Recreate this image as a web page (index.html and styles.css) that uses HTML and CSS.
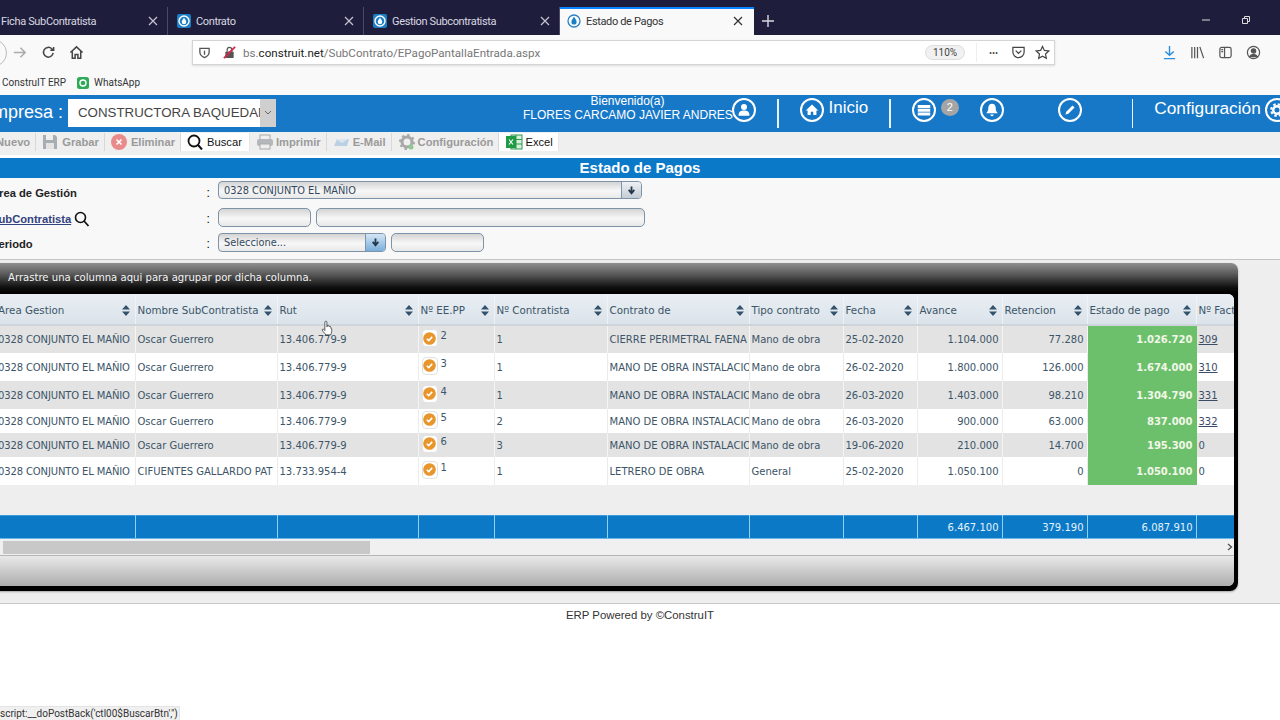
FILE: index.html
```html
<!DOCTYPE html>
<html lang="es">
<head>
  <meta charset="UTF-8" />
  <title>Estado de Pagos</title>
  <link rel="stylesheet" href="styles.css">
</head>
<body>
  <!-- browser chrome -->
  <div class="tabbar">
    <div class="tab first">
      <svg class="favicon" viewBox="0 0 14 14"><rect width="14" height="14" rx="2" fill="#1c7fc4"/><circle cx="7" cy="7" r="5" fill="none" stroke="#fff" stroke-width="1.4"/><path d="M7 3.500c.8 1.600 2.200 2.800 2.200 4.500a2.200 2.200 0 0 1-4.400 0c0-1.700 1.400-2.900 2.200-4.500z" fill="#fff"/></svg>
      <span class="tab-title">Ficha SubContratista</span>
      <svg class="tab-close" viewBox="0 0 10 10"><path d="M1 1l8 8M9 1l-8 8"/></svg>
    </div>
    <div class="tab">
      <svg class="favicon" viewBox="0 0 14 14"><rect width="14" height="14" rx="2" fill="#1c7fc4"/><circle cx="7" cy="7" r="5" fill="none" stroke="#fff" stroke-width="1.4"/><path d="M7 3.500c.8 1.600 2.200 2.800 2.200 4.500a2.200 2.200 0 0 1-4.400 0c0-1.700 1.400-2.900 2.200-4.500z" fill="#fff"/></svg>
      <span class="tab-title">Contrato</span>
      <svg class="tab-close" viewBox="0 0 10 10"><path d="M1 1l8 8M9 1l-8 8"/></svg>
    </div>
    <div class="tab">
      <svg class="favicon" viewBox="0 0 14 14"><rect width="14" height="14" rx="2" fill="#1c7fc4"/><circle cx="7" cy="7" r="5" fill="none" stroke="#fff" stroke-width="1.4"/><path d="M7 3.500c.8 1.600 2.200 2.800 2.200 4.500a2.200 2.200 0 0 1-4.400 0c0-1.700 1.400-2.900 2.200-4.500z" fill="#fff"/></svg>
      <span class="tab-title">Gestion Subcontratista</span>
      <svg class="tab-close" viewBox="0 0 10 10"><path d="M1 1l8 8M9 1l-8 8"/></svg>
    </div>
    <div class="tab active">
      <svg class="favicon" viewBox="0 0 14 14"><circle cx="7" cy="7" r="6" fill="#fff" stroke="#2a82c6" stroke-width="1.3"/><path d="M7 2.500c1 2 2.600 3.600 2.600 5.400A2.600 2.600 0 0 1 4.400 7.900C4.400 6.100 6 4.500 7 2.500z" fill="#1c7fc4"/></svg>
      <span class="tab-title">Estado de Pagos</span>
      <svg class="tab-close" viewBox="0 0 10 10"><path d="M1 1l8 8M9 1l-8 8"/></svg>
    </div>
    <svg class="tab-new" viewBox="0 0 14 14"><path d="M7 1v12M1 7h12"/></svg>
    <div class="window-btns">
      <svg viewBox="0 0 10 10"><path d="M1 5h8"/></svg>
      <svg viewBox="0 0 10 10"><path d="M1.500 3.500h5v5h-5zM3.500 3.500v-2h5v5h-2"/></svg>
    </div>
  </div>

  <div class="navbar">
    <div class="nav-back"></div>
    <svg class="nav-ico fwd" viewBox="0 0 16 16"><path d="M2 8h12M9 3l5 5-5 5"/></svg>
    <svg class="nav-ico reload" viewBox="0 0 16 16"><path d="M13 8.500A5.200 5.200 0 1 1 11.500 4L13.500 5.500M13.500 2v3.500H10"/></svg>
    <svg class="nav-ico home" viewBox="0 0 16 16"><path d="M1.500 8L8 2l6.500 6M3.500 7v7h3v-4h3v4h3V7"/></svg>
    <div class="urlbar">
      <svg class="url-shield" viewBox="0 0 14 14"><path d="M2 2.500h10v4c0 3.500-2.500 5-5 6-2.500-1-5-2.500-5-6z"/><path d="M7 5v4.500" /></svg>
      <svg class="url-lock" viewBox="0 0 14 14"><rect x="2.500" y="6" width="9" height="7" rx="1" fill="#555"/><path d="M4.500 6V4a2.500 2.500 0 0 1 5 0v2" fill="none" stroke="#555" stroke-width="1.300"/><path d="M1 13L13 1" stroke="#d7264a" stroke-width="2"/></svg>
      <span class="url-text">bs.<b>construit.net</b>/SubContrato/EPagoPantallaEntrada.aspx</span>
      <span class="zoom-pill">110%</span>
      <span class="url-sep"></span>
      <span class="url-dots">•••</span>
      <svg class="url-ico" viewBox="0 0 16 16"><path d="M2 2.500h12v5a6 6 0 0 1-12 0zM5 6l3 3 3-3"/></svg>
      <svg class="url-ico" viewBox="0 0 16 16"><path d="M8 1.500l2 4.300 4.700.6-3.500 3.200.9 4.700L8 12l-4.100 2.300.9-4.700L1.300 6.400 6 5.800z"/></svg>
    </div>
    <svg class="side-ico dl" viewBox="0 0 16 16"><path d="M8 1v10M3.500 7L8 11l4.500-4M2 14.500h12"/></svg>
    <svg class="side-ico" viewBox="0 0 16 16"><path d="M2 2v12M5 2v12M8 2v12M10.500 2l4 12"/></svg>
    <svg class="side-ico" viewBox="0 0 16 16"><rect x="2" y="2.500" width="12" height="11" rx="2"/><path d="M7 2.500v11" /><path d="M3.500 5h2M3.500 7h2" /></svg>
    <svg class="side-ico" viewBox="0 0 16 16"><circle cx="8" cy="8" r="6.500"/><circle cx="8" cy="6.300" r="2.300" fill="#555"/><path d="M3.800 12.500c1-2 2.500-2.500 4.200-2.500s3.200.5 4.200 2.500z" fill="#555"/></svg>
  </div>

  <div class="bookmarks">
    <span class="bm-item">ConstruIT ERP</span>
    <svg class="bm-wa" viewBox="0 0 12 12"><rect width="12" height="12" rx="2.500" fill="#2faa58"/><circle cx="6" cy="6" r="3.700" fill="#fff"/><circle cx="6" cy="6" r="2.300" fill="#2faa58"/></svg>
    <span class="bm-item">WhatsApp</span>
  </div>

  <!-- application header -->
  <header class="appbar">
    <span class="empresa-label">Empresa :</span>
    <div class="empresa-select">
      <span class="empresa-value">CONSTRUCTORA BAQUEDANO</span>
      <span class="empresa-arrow"><svg viewBox="0 0 8 5"><path d="M1 1l3 3 3-3"/></svg></span>
    </div>
    <div class="welcome">
      <div>Bienvenido(a)</div>
      <div>FLORES CARCAMO JAVIER ANDRES</div>
    </div>
    <span class="ring user"><svg viewBox="0 0 24 24"><circle cx="12" cy="8.500" r="3.600"/><path d="M5.500 18c0-4 2.500-5.500 6.500-5.500s6.500 1.500 6.500 5.500c0 .8-.5 1-1 1h-11c-.5 0-1-.2-1-1z"/></svg></span>
    <span class="bar-sep s1"></span>
    <span class="ring home"><svg viewBox="0 0 24 24"><path d="M12 5.500L4.500 12.500h2.200V18h3.800v-4h3v4h3.800v-5.500h2.200z"/></svg></span>
    <span class="bar-link inicio">Inicio</span>
    <span class="bar-sep s2"></span>
    <span class="ring list"><svg viewBox="0 0 24 24"><path d="M4.500 6h15v3.500h-15zM4.500 10.500h15v3.500h-15zM4.500 15h15v3.500h-15z"/></svg></span>
    <span class="badge">2</span>
    <span class="ring bell"><svg viewBox="0 0 24 24"><path d="M12 4.500c3 0 4.500 2.500 4.500 5.500 0 3 1 4.500 2.500 6H5c1.500-1.500 2.500-3 2.500-6 0-3 1.500-5.500 4.500-5.500z"/><path d="M10 17.500h4a2 2 0 0 1-4 0z"/></svg></span>
    <span class="ring pencil"><svg viewBox="0 0 24 24"><path d="M15 6.500l2.500 2.500-7.500 7.500-3.500 1 1-3.500z"/></svg></span>
    <span class="bar-sep s3"></span>
    <span class="bar-link config">Configuración</span>
    <span class="ring gear"><svg viewBox="0 0 24 24"><circle cx="12" cy="12" r="4.500" fill="none" stroke="#fff" stroke-width="3"/><circle cx="12" cy="12" r="7" fill="none" stroke="#fff" stroke-width="2.500" stroke-dasharray="3 2.500"/></svg></span>
  </header>

  <div class="toolbar">
    <div class="tool nuevo"><span>Nuevo</span></div>
    <div class="tool">
      <svg class="tool-ico" viewBox="0 0 16 16"><path d="M1 1h12l2 2v12H1z" fill="#a8adb2"/><rect x="4" y="1" width="7" height="5" fill="#eee"/><rect x="4" y="9" width="8" height="6" fill="#e4e4e4"/></svg>
      <span>Grabar</span>
    </div>
    <div class="tool">
      <svg class="tool-ico" viewBox="0 0 16 16"><circle cx="8" cy="8" r="8" fill="#e98b8b"/><path d="M5.500 5.500l5 5M10.500 5.500l-5 5" stroke="#fff" stroke-width="1.600"/></svg>
      <span>Eliminar</span>
    </div>
    <div class="tool on buscar">
      <svg class="tool-ico" viewBox="0 0 16 16"><circle cx="7" cy="7" r="5.500" fill="none" stroke="#111" stroke-width="1.800"/><path d="M11 11l4 4.500" stroke="#111" stroke-width="2"/></svg>
      <span>Buscar</span>
    </div>
    <div class="tool">
      <svg class="tool-ico wide" viewBox="0 0 18 16"><rect x="4" y="1" width="10" height="5" fill="none" stroke="#aaa"/><rect x="1" y="5" width="16" height="7" rx="2" fill="#b4b8bc"/><rect x="4" y="10" width="10" height="5" fill="#eee" stroke="#aaa"/></svg>
      <span>Imprimir</span>
    </div>
    <div class="tool">
      <svg class="tool-ico wide" viewBox="0 0 18 16"><path d="M1 12l3-7h12l-2 7z" fill="#bcd0e4"/><path d="M3 5h12l-6 4z" fill="#dbe6f0"/></svg>
      <span>E-Mail</span>
    </div>
    <div class="tool">
      <svg class="tool-ico wide" viewBox="0 0 18 16"><circle cx="9" cy="8" r="5" fill="none" stroke="#a8a8a8" stroke-width="3"/><circle cx="9" cy="8" r="7" fill="none" stroke="#a8a8a8" stroke-width="2" stroke-dasharray="2.500 3"/><circle cx="13" cy="13" r="2.500" fill="#8fc98f"/></svg>
      <span>Configuración</span>
    </div>
    <div class="tool on excel">
      <svg class="tool-ico wide" viewBox="0 0 18 16"><rect x="6" y="1" width="11" height="14" fill="#d7efdc" stroke="#2d9a4c"/><path d="M11 1v14M6 5.500h11M6 10h11" stroke="#2d9a4c"/><rect x="1" y="2" width="10" height="12" fill="#1f9a45"/><path d="M4 5.500l4 5M8 5.500l-4 5" stroke="#fff" stroke-width="1.200"/></svg>
      <span>Excel</span>
    </div>
  </div>

  <h1 class="page-title">Estado de Pagos</h1>

  <form class="filters">
    <label class="f-label">Area de Gestión</label>
    <span class="f-colon">:</span>
    <div class="f-fields">
      <div class="combo wide-combo"><span>0328 CONJUNTO EL MAÑIO</span><i class="combo-btn"><svg viewBox="0 0 8 8"><path d="M4 .5v5M1.500 3.500L4 6.500l2.500-3"/></svg></i></div>
    </div>
    <label class="f-label"><a href="#">SubContratista</a>
      <svg class="f-search" viewBox="0 0 16 16"><circle cx="6.500" cy="6.500" r="5" fill="none" stroke="#111" stroke-width="1.600"/><path d="M10 10l4.500 5" stroke="#111" stroke-width="1.800"/></svg>
    </label>
    <span class="f-colon">:</span>
    <div class="f-fields gap">
      <div class="txt w-rut"></div>
      <div class="txt w-name"></div>
    </div>
    <label class="f-label">Periodo</label>
    <span class="f-colon">:</span>
    <div class="f-fields gap">
      <div class="combo w-per"><span>Seleccione...</span><i class="combo-btn blue"><svg viewBox="0 0 8 8"><path d="M4 .5v5M1.500 3.500L4 6.500l2.500-3"/></svg></i></div>
      <div class="txt w-year"></div>
    </div>
  </form>

  <main class="content">
    <section class="panel">
      <div class="panel-head">Arrastre una columna aqui para agrupar por dicha columna.</div>
      <div class="panel-body">
        <table class="grid">
          <colgroup>
            <col class="c1"><col class="c2"><col class="c3"><col class="c4"><col class="c5"><col class="c6">
            <col class="c7"><col class="c8"><col class="c9"><col class="c10"><col class="c11"><col class="c12">
          </colgroup>
          <thead>
            <tr id="gridHead"></tr>
          </thead>
          <tbody id="gridBody"></tbody>
          <tfoot>
            <tr>
              <td></td><td></td><td></td><td></td><td></td><td></td><td></td><td></td>
              <td class="num">6.467.100</td><td class="num">379.190</td><td class="num">6.087.910</td><td></td>
            </tr>
          </tfoot>
        </table>
        <div class="hscroll">
          <div class="hscroll-thumb"></div>
          <svg class="hscroll-arrow" viewBox="0 0 6 8"><path d="M1 1l3.500 3L1 7"/></svg>
        </div>
        <div class="panel-foot"></div>
      </div>
    </section>
  </main>

  <footer class="page-foot">ERP Powered by ©ConstruIT</footer>

  <svg class="hand" viewBox="0 0 14 18"><path d="M4.500 9V2.300a1.200 1.200 0 0 1 2.400 0V7.500h.3V6.500a1.100 1.100 0 0 1 2.100 0v1h.2a1.100 1.100 0 0 1 2 .4V9.500a1 1 0 0 1 1 .5v3c0 1.500-1 2.500-1 4H5.500c-.5-1.500-3.500-4-4-5.500-.3-1 .8-1.800 1.700-1L4.500 12z"/></svg>
  <div class="status-tip">script:__doPostBack('ctl00$BuscarBtn','')</div>

  <script>
    // grid data
    var heads = ['Area Gestion', 'Nombre SubContratista', 'Rut', 'Nº EE.PP', 'Nº Contratista', 'Contrato de',
      'Tipo contrato', 'Fecha', 'Avance', 'Retencion', 'Estado de pago', 'Nº Factura'];
    var rows = [
      ['Oscar Guerrero', '13.406.779-9', 2, 1, 'CIERRE PERIMETRAL FAENA', 'Mano de obra', '25-02-2020', '1.104.000', '77.280', '1.026.720', '309', 'h28'],
      ['Oscar Guerrero', '13.406.779-9', 3, 1, 'MANO DE OBRA INSTALACION', 'Mano de obra', '26-02-2020', '1.800.000', '126.000', '1.674.000', '310', 'h28'],
      ['Oscar Guerrero', '13.406.779-9', 4, 1, 'MANO DE OBRA INSTALACION', 'Mano de obra', '26-03-2020', '1.403.000', '98.210', '1.304.790', '331', 'h28'],
      ['Oscar Guerrero', '13.406.779-9', 5, 2, 'MANO DE OBRA INSTALACION', 'Mano de obra', '26-03-2020', '900.000', '63.000', '837.000', '332', 'h24'],
      ['Oscar Guerrero', '13.406.779-9', 6, 3, 'MANO DE OBRA INSTALACION', 'Mano de obra', '19-06-2020', '210.000', '14.700', '195.300', '0', 'h24'],
      ['CIFUENTES GALLARDO PAT', '13.733.954-4', 1, 1, 'LETRERO DE OBRA', 'General', '25-02-2020', '1.050.100', '0', '1.050.100', '0', 'h28']
    ];
    var sortIcon = '<svg class="sort" viewBox="0 0 8 11"><path d="M4 0l4 4.500H0zM4 11L0 6.500h8z"/></svg>';
    var checkIcon = '<span class="chk"><svg viewBox="0 0 12 12"><circle cx="6" cy="6" r="5.800" fill="#e8952c"/><path d="M3.500 6.200l1.800 1.800 3.200-3.500" fill="none" stroke="#fff" stroke-width="1.500"/></svg></span>';

    document.getElementById('gridHead').innerHTML = heads.map(function (h, i) {
      return '<th><div class="th-in"><span>' + h + '</span>' + (i < 11 ? sortIcon : '') + '</div></th>';
    }).join('');

    document.getElementById('gridBody').innerHTML = rows.map(function (r) {
      var fact = r[10] === '0' ? '0' : '<a href="#">' + r[10] + '</a>';
      return '<tr class="' + r[11] + '">' +
        '<td class="area">0328 CONJUNTO EL MAÑIO</td><td>' + r[0] + '</td><td>' + r[1] + '</td>' +
        '<td class="ee">' + checkIcon + '<sup>' + r[2] + '</sup></td><td>' + r[3] + '</td>' +
        '<td>' + r[4] + '</td><td>' + r[5] + '</td><td>' + r[6] + '</td>' +
        '<td class="num">' + r[7] + '</td><td class="num">' + r[8] + '</td>' +
        '<td class="num pay">' + r[9] + '</td><td>' + fact + '</td></tr>';
    }).join('') + '<tr class="spacer"><td colspan="12"></td></tr>';
  </script>
</body>
</html>
```

FILE: styles.css
```css
html, body {
  margin: 0;
  height: 100%;
  overflow: hidden;
}
body {
  background: #fff;
  font-family: "Liberation Sans", Arial, sans-serif;
  width: 1280px;
  height: 720px;
  position: relative;
}

/* browser tabs */
.tabbar {
  height: 35px;
  background: #1f1d3c;
  display: flex;
  align-items: flex-end;
  font-family: Roboto, sans-serif;
}
.tab {
  width: 196px;
  height: 28px;
  box-sizing: border-box;
  display: flex;
  align-items: center;
  padding: 0 9px 0 9px;
  color: #d9d9e2;
  font-size: 11px;
  letter-spacing: -0.35px;
  border-right: 1px solid #4a4968;
}
.tab.first {
  margin-left: -27px;
  width: 195px;
}
.tab.active {
  height: 28px;
  width: 194px;
  padding: 0 11px 2px 7px;
  background: #f9f9fa;
  color: #333;
  border-right: none;
  border-top: 2px solid #0a84ff;
}
.favicon {
  width: 14px;
  height: 14px;
  margin-right: 5px;
  flex: none;
}
.tab-title {
  flex: 1;
  white-space: nowrap;
}
.tab-close {
  width: 10px;
  height: 10px;
  stroke: #c4c4d0;
  stroke-width: 1.2;
  fill: none;
}
.tab.active .tab-close {
  stroke: #333;
}
.tab-new {
  width: 14px;
  height: 14px;
  margin: 0 0 7px 7px;
  stroke: #d8d8e0;
  stroke-width: 1.4;
  fill: none;
}
.window-btns {
  margin-left: auto;
  margin-right: 29px;
  margin-bottom: 10px;
  display: flex;
  gap: 30px;
}
.window-btns svg {
  width: 10px;
  height: 10px;
  stroke: #ddd;
  fill: none;
}

/* nav bar */
.navbar {
  height: 35px;
  background: #f9f9fa;
  display: flex;
  align-items: center;
  position: relative;
}
.nav-back {
  width: 26px;
  height: 26px;
  border: 1px solid #bbb;
  border-radius: 50%;
  margin-left: -21px;
  flex: none;
}
.nav-ico {
  width: 15px;
  height: 15px;
  fill: none;
  stroke-width: 1.6;
  stroke: #444;
  flex: none;
}
.nav-ico.fwd {
  stroke: #aaa;
  margin-left: 5px;
}
.nav-ico.reload {
  margin-left: 14px;
}
.nav-ico.home {
  margin-left: 13px;
}
.urlbar {
  width: 863px;
  height: 25px;
  box-sizing: border-box;
  margin-left: 108px;
  background: #fff;
  border: 1px solid #d4d4d6;
  box-shadow: 0 1px 2px rgba(0,0,0,0.12);
  display: flex;
  align-items: center;
  font-family: Roboto, sans-serif;
  font-size: 11.6px;
  color: #777;
}
.url-shield {
  width: 13px;
  height: 13px;
  margin-left: 5px;
  fill: none;
  stroke: #555;
  stroke-width: 1.400;
}
.url-lock {
  width: 13px;
  height: 13px;
  margin-left: 12px;
}
.url-text {
  margin-left: 7px;
  white-space: nowrap;
}
.url-text b {
  font-weight: 400;
  color: #222;
}
.zoom-pill {
  margin-left: auto;
  width: 40px;
  height: 15px;
  box-sizing: border-box;
  line-height: 13px;
  text-align: center;
  font-size: 10px;
  color: #444;
  background: #f1f1f2;
  border: 1px solid #ddd;
  border-radius: 8px;
}
.url-sep {
  width: 1px;
  height: 19px;
  background: #eee;
  margin: 0 12px 0 11px;
}
.url-dots {
  color: #444;
  font-size: 9px;
  width: 13px;
  white-space: nowrap;
}
.url-ico {
  width: 15px;
  height: 15px;
  margin-left: 9px;
  stroke: #444;
  stroke-width: 1.300;
  fill: none;
}
.url-ico:last-child {
  margin-right: 4px;
}
.side-ico {
  width: 15px;
  height: 15px;
  margin-left: 13px;
  stroke: #555;
  stroke-width: 1.300;
  fill: none;
  flex: none;
}
.side-ico.dl {
  stroke: #2a8ee0;
  stroke-width: 1.500;
  margin-left: 107px;
}

/* bookmarks */
.bookmarks {
  height: 25px;
  background: #f9f9fa;
  display: flex;
  align-items: center;
  font-family: Roboto, sans-serif;
  font-size: 10px;
  color: #333;
  padding-left: 2px;
  box-sizing: border-box;
}
.bm-wa {
  width: 12px;
  height: 12px;
  margin: 0 5px 0 11px;
}

/* blue header of the app */
.appbar {
  height: 37px;
  background: #1878c8;
  color: #fff;
  display: flex;
  align-items: center;
}
.empresa-label {
  font-size: 18px;
  margin-left: -19px;
  width: 87px;
  flex: none;
  white-space: nowrap;
  margin-bottom: 2px;
}
.empresa-select {
  width: 208px;
  height: 28px;
  margin-bottom: 2px;
  background: #fff;
  color: #444;
  font-size: 13.3px;
  display: flex;
  align-items: center;
  flex: none;
}
.empresa-value {
  width: 182px;
  padding: 0 0 1px 10px;
  overflow: hidden;
  white-space: nowrap;
}
.empresa-arrow {
  width: 16px;
  height: 28px;
  background: #cfcfcf;
  display: flex;
  align-items: center;
  justify-content: center;
}
.empresa-arrow svg {
  width: 8px;
  height: 5px;
  fill: none;
  stroke: #666;
}
.welcome {
  width: 209px;
  margin-left: 247px;
  text-align: center;
  font-size: 12px;
  line-height: 14px;
  margin-bottom: 11px;
  white-space: nowrap;
  flex: none;
}
.ring {
  width: 24px;
  height: 24px;
  box-sizing: border-box;
  border: 2px solid #fff;
  border-radius: 50%;
  margin-bottom: 7px;
  flex: none;
  display: flex;
  align-items: center;
  justify-content: center;
}
.ring svg {
  width: 20px;
  height: 20px;
  fill: #fff;
}
.ring.home {
  margin-left: 21px;
}
.ring.list {
  margin-left: 21px;
}
.ring.bell {
  margin-left: 21px;
}
.ring.pencil {
  margin-left: 54px;
}
.ring.gear {
  margin-left: 4px;
}
.bar-sep {
  width: 1.5px;
  height: 29px;
  background: #e8f2fa;
  flex: none;
}
.bar-sep.s1 {
  margin-left: 21px;
}
.bar-sep.s2 {
  margin-left: 21px;
}
.bar-sep.s3 {
  margin-left: 50px;
}
.bar-link {
  font-size: 17.3px;
  margin-bottom: 11px;
  flex: none;
}
.inicio {
  margin-left: 5px;
  font-size: 17px;
}
.config {
  margin-left: 21px;
}
.badge {
  width: 18px;
  height: 17px;
  line-height: 17px;
  text-align: center;
  margin: 0 0 12px 5px;
  background: #a5a5a5;
  border-radius: 50%;
  font-size: 11px;
  flex: none;
}

/* action toolbar */
.toolbar {
  height: 19px;
  margin-left: -10px;
  background: #efefef;
  display: flex;
  align-items: center;
  font-size: 11.2px;
  font-weight: bold;
  color: #9a9a9a;
  padding-bottom: 4px;
}
.tool {
  display: flex;
  align-items: center;
  gap: 4px;
  padding: 0 5px 0 6px;
  border-right: 1px solid #d8d8d8;
  height: 18px;
  white-space: nowrap;
}
.tool.on {
  color: #111;
  font-weight: normal;
  background: #fff;
  border-right-color: #e6e6e6;
}
.tool.buscar {
  padding-right: 7px;
}
.tool-ico {
  width: 16px;
  height: 16px;
}
.tool-ico.wide {
  width: 18px;
  margin-right: -2px;
}
.page-title {
  margin: 3px 0 0 0;
  height: 20px;
  line-height: 20px;
  background: #0a79c7;
  color: #fff;
  text-align: center;
  font-size: 15px;
}

/* filter form */
.filters {
  box-sizing: border-box;
  height: 81px;
  padding-top: 3px;
  margin-left: -9px;
  background: #f8f8f8;
  display: grid;
  grid-template-columns: 215.5px 11.5px 1fr;
  grid-template-rows: 27px 25px 25px;
  align-items: start;
  font-size: 11.2px;
}
.f-label {
  font-weight: bold;
  color: #222;
  align-self: center;
  margin-bottom: 3px;
  display: flex;
  align-items: center;
  gap: 3px;
}
.f-label a {
  color: #33427f;
}
.f-search {
  width: 16px;
  height: 16px;
}
.f-colon {
  align-self: center;
  font-size: 12px;
  margin-bottom: 4px;
}
.f-fields {
  display: flex;
}
.f-fields.gap {
  gap: 5px;
}
.combo,
.txt {
  box-sizing: border-box;
  height: 18px;
  border: 1px solid #7d93a8;
  border-radius: 4px;
  background: linear-gradient(#d4d4d4, #f7f7f7 55%, #e8e8e8);
}
.txt {
  height: 19px;
  border-radius: 5px;
}
.combo {
  display: flex;
  align-items: center;
  justify-content: space-between;
  font-family: "DejaVu Sans", Verdana, sans-serif;
  font-size: 9.8px;
  color: #33485c;
  padding-left: 5px;
  overflow: hidden;
}
.combo-btn {
  width: 19px;
  height: 100%;
  background: linear-gradient(#eef1f4, #c4ccd4);
  border-left: 1px solid #7d93a8;
  display: flex;
  align-items: center;
  justify-content: center;
}
.combo-btn.blue {
  background: linear-gradient(#d5e6f5, #79aedb);
}
.combo-btn svg {
  width: 9px;
  height: 9px;
  fill: none;
  stroke: #24384c;
  stroke-width: 1.600;
}
.wide-combo {
  width: 424px;
}
.w-rut {
  width: 93px;
}
.w-name {
  width: 329px;
}
.w-per {
  width: 168px;
  height: 19px;
}
.w-year {
  width: 93px;
}

/* grid panel */
.content {
  height: 345px;
  background: #eee;
  border-top: 1px solid #c4c4c4;
  border-bottom: 1px solid #c8c8c8;
  padding-top: 3px;
  box-sizing: border-box;
}
.panel {
  margin-left: -4px;
  width: 1242px;
  box-sizing: border-box;
  padding: 0 4px 5px 0;
  background: linear-gradient(#909090 0, #555 12px, #111 24px, #000 30px);
  border-radius: 0 7px 8px 0;
  box-shadow: 0 1px 2px rgba(0,0,0,0.3);
}
.panel-head {
  height: 31px;
  line-height: 30px;
  padding-left: 12px;
  font-family: "DejaVu Sans", Verdana, sans-serif;
  font-size: 10.1px;
  color: #f4f4f4;
}
.panel-body {
  background: #eee;
  border-radius: 0 6px 6px 0;
  overflow: hidden;
}
.grid {
  width: 1238px;
  table-layout: fixed;
  border-collapse: collapse;
  font-family: "DejaVu Sans", Verdana, sans-serif;
  font-size: 10px;
  color: #3c5568;
}
.c1 { width: 139px; }
.c2 { width: 142px; }
.c3 { width: 141px; }
.c4 { width: 76px; }
.c5 { width: 113px; }
.c6 { width: 142px; }
.c7 { width: 94px; }
.c8 { width: 74px; }
.c9 { width: 85px; }
.c10 { width: 85px; }
.c11 { width: 109px; }
.c12 { width: 38px; }
.grid th {
  height: 31px;
  box-sizing: border-box;
  padding: 2px 5px 0 2px;
  background: linear-gradient(#e8eef3, #dbe3ea);
  border-right: 1px solid #f0f3f6;
  border-bottom: 2px solid #cfd5da;
  font-weight: normal;
  font-size: 10.3px;
  text-align: left;
  overflow: hidden;
}
.th-in {
  display: flex;
  justify-content: space-between;
  align-items: center;
  white-space: nowrap;
}
.sort {
  width: 8px;
  height: 11px;
  fill: #33536d;
  flex: none;
}
.grid td {
  padding: 0 2px;
  white-space: nowrap;
  overflow: hidden;
  border-right: 1px solid #f4f4f4;
}
.grid tbody tr:nth-child(odd) td {
  background: #e3e3e3;
}
.grid tbody tr:nth-child(even) td {
  background: #fff;
  border-right-color: #ececec;
}
.h28 { height: 28px; }
.h24 { height: 24px; }
.grid td.num {
  text-align: right;
  padding-right: 3px;
}
.grid td.area {
  letter-spacing: -0.13px;
}
.grid tbody tr:nth-child(n) td.pay {
  background: #6cc06c;
  color: #f2f7e8;
  font-weight: bold;
  border-right-color: #6cc06c;
}
.grid td a {
  color: #3c4c68;
}
.ee sup {
  font-size: 10px;
  vertical-align: 4px;
  line-height: 0;
}
.chk {
  display: inline-flex;
  align-items: center;
  justify-content: center;
  width: 16px;
  height: 18px;
  box-sizing: border-box;
  background: #fff;
  border: 1px solid #e2e2e2;
  border-radius: 4px;
  vertical-align: middle;
  margin: -3px 3px 0 1px;
}
.chk svg {
  width: 13px;
  height: 13px;
}
.grid .spacer td {
  height: 30px;
  padding: 0;
  background: #eee !important;
  border: none;
}
.grid tfoot td {
  height: 23px;
  box-sizing: border-box;
  background: #0b79c6;
  color: #e6f3fb;
  border-right: 1px solid #8fd0f4;
  border-top: 1px solid #3d9ad8;
  border-bottom: 1px solid #69b8e8;
}
.hscroll {
  height: 16px;
  position: relative;
  display: flex;
  align-items: center;
  padding-left: 7px;
  background: #f0f0f0;
}
.hscroll-thumb {
  width: 367px;
  height: 13px;
  background: #c8c8c8;
}
.hscroll-arrow {
  width: 6px;
  height: 8px;
  margin-left: auto;
  margin-right: 1px;
  fill: none;
  stroke: #555;
  stroke-width: 1.400;
}
.panel-foot {
  height: 31px;
  box-sizing: border-box;
  border-top: 1px solid #b5b5b5;
  background: linear-gradient(#e9e9e9, #adadad);
}

.page-foot {
  text-align: center;
  font-size: 11.4px;
  color: #333;
  padding-top: 5px;
}

/* things lying over the page */
.hand {
  position: absolute;
  left: 321px;
  top: 320px;
  width: 12px;
  height: 16px;
  fill: #fff;
  stroke: #333;
  stroke-width: 0.900;
}
.status-tip {
  position: absolute;
  left: 0;
  bottom: 0;
  width: 180px;
  height: 14px;
  line-height: 14px;
  box-sizing: border-box;
  padding-right: 4px;
  background: #f0f0f0;
  border: 1px solid #e4e4e4;
  border-width: 1px 1px 0 0;
  font-family: Roboto, sans-serif;
  font-size: 10px;
  color: #333;
  white-space: nowrap;
  overflow: hidden;
}
```
